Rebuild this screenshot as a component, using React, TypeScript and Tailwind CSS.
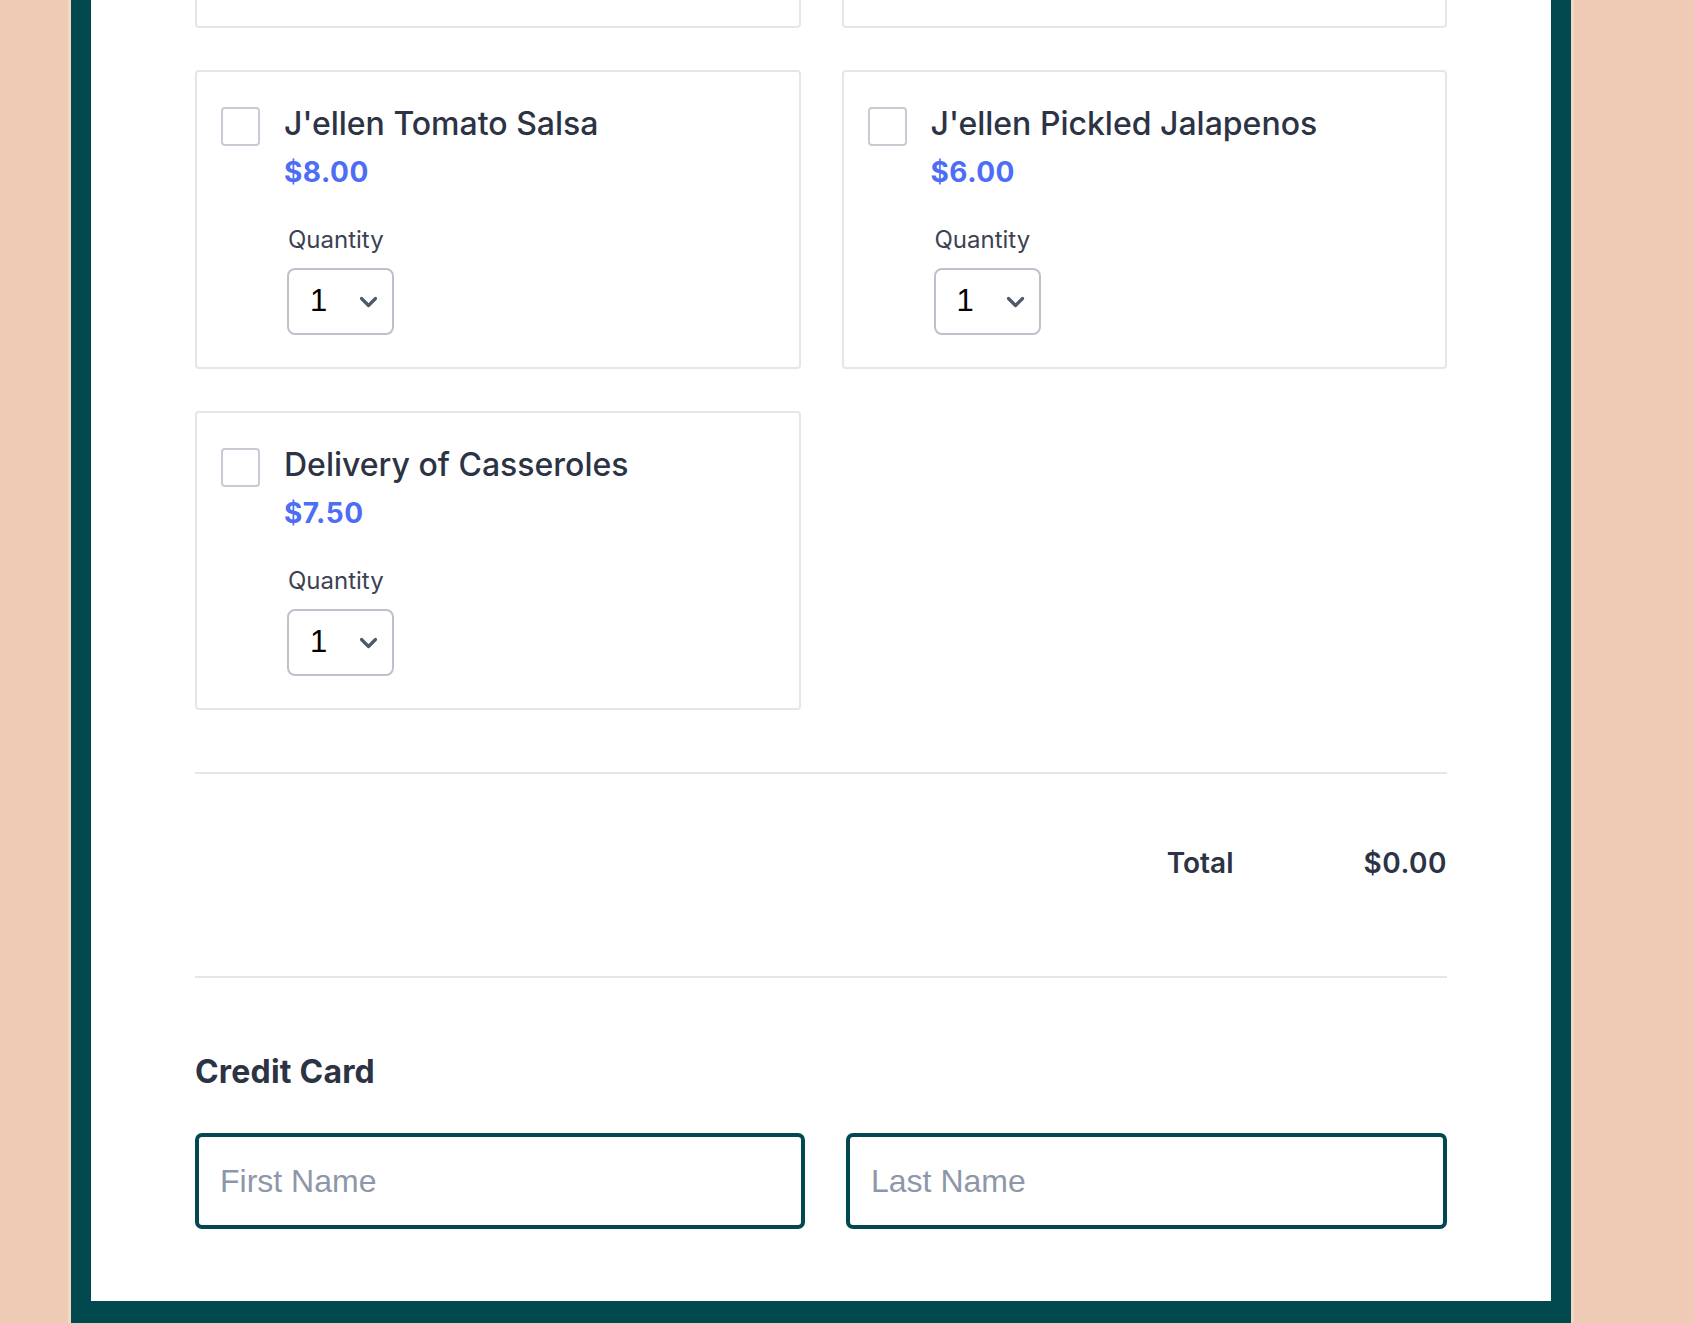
import { useState } from 'react'

type Product = {
  name: string
  price: string
}

const products: Product[] = [
  { name: "J'ellen Tomato Salsa", price: '$8.00' },
  { name: "J'ellen Pickled Jalapenos", price: '$6.00' },
  { name: 'Delivery of Casseroles', price: '$7.50' },
]

function Chevron() {
  return (
    <svg
      aria-hidden
      viewBox="0 0 19 12"
      className="pointer-events-none absolute right-[16px] top-1/2 h-[12px] w-[19px] -translate-y-1/2"
    >
      <path d="M2.5 2.5 L9.5 9.5 L16.5 2.5" fill="none" stroke="#4f596c" strokeWidth="3.2" strokeLinecap="round" strokeLinejoin="round" />
    </svg>
  )
}

function ProductCard({ product }: { product: Product }) {
  const [checked, setChecked] = useState(false)
  const [qty, setQty] = useState('1')

  return (
    <div className="h-[299px] rounded-[4px] border-2 border-[#e3e6eb] bg-white pl-[24px] pr-[24px] pt-[33px]">
      <div className="flex items-start gap-[24px]">
        <input
          type="checkbox"
          checked={checked}
          onChange={(e) => setChecked(e.target.checked)}
          className="mt-[2px] h-[39px] w-[39px] shrink-0 appearance-none rounded-[4px] border-2 border-[#c6cbd4] bg-white checked:bg-[#4e6df5]"
        />
        <div className="flex flex-col">
          <div className="text-[32px] font-medium leading-[38px] text-[#2c3345]">{product.name}</div>
          <div className="mt-[13px] text-[28px] font-bold leading-[32px] tracking-[0.5px] text-[#4e6df5]">{product.price}</div>
          <div className="ml-[3px] mt-[38px] flex flex-col">
            <label className="pl-[1px] text-[24px] font-normal leading-[28px] text-[#3c4254]">Quantity</label>
            <div className="relative mt-[14px] w-[107px]">
              <select
                value={qty}
                onChange={(e) => setQty(e.target.value)}
                className="h-[67px] w-[107px] appearance-none rounded-[8px] border-2 border-[#bcc1cc] bg-white pl-[21px] text-[31px] text-black outline-none"
                style={{ fontFamily: '"Liberation Sans", Arial, sans-serif' }}
              >
                {['1', '2', '3', '4', '5'].map((n) => (
                  <option key={n} value={n}>
                    {n}
                  </option>
                ))}
              </select>
              <Chevron />
            </div>
          </div>
        </div>
      </div>
    </div>
  )
}

export default function App() {
  return (
    <div
      className="h-[1324px] overflow-hidden bg-[#efcab5]"
      style={{ fontFamily: 'Inter, "Noto Sans", sans-serif' }}
    >
      <div className="ml-[68px] w-[1506px] border-x-[3px] border-[#f3d6c6]">
        <div className="bg-[#02484f] px-[20px] pb-[22px]">
          <div className="bg-white px-[104px] pb-[72px]">
            {/* product grid, first row scrolled off the top */}
            <div className="grid grid-cols-2 gap-x-[41px] gap-y-[42px]">
              <div className="h-[28px] rounded-b-[4px] border-2 border-t-0 border-[#e3e6eb]" />
              <div className="h-[28px] rounded-b-[4px] border-2 border-t-0 border-[#e3e6eb]" />
              {products.map((p) => (
                <ProductCard key={p.name} product={p} />
              ))}
            </div>

            <div className="mt-[62px] h-[2px] bg-[#e3e6eb]" />

            <div className="flex justify-end pb-[96px] pt-[72px] text-[28px] font-semibold leading-[34px] text-[#2c3345]">
              <span>Total</span>
              <span className="ml-[130px] tracking-[0.5px]">$0.00</span>
            </div>

            <div className="h-[2px] bg-[#e3e6eb]" />

            <h2 className="mt-[75px] text-[32px] font-bold leading-[38px] tracking-[0.2px] text-[#2c3345]">Credit Card</h2>

            <div className="mt-[42px] grid grid-cols-[610px_1fr] gap-x-[41px]">
              <input
                placeholder="First Name"
                className="h-[96px] w-full rounded-[7px] border-4 border-[#02484f] bg-white px-[21px] text-[32px] text-[#2c3345] outline-none placeholder:text-[#8e97aa]"
                style={{ fontFamily: '"Liberation Sans", Arial, sans-serif' }}
              />
              <input
                placeholder="Last Name"
                className="h-[96px] w-full rounded-[7px] border-4 border-[#02484f] bg-white px-[21px] text-[32px] text-[#2c3345] outline-none placeholder:text-[#8e97aa]"
                style={{ fontFamily: '"Liberation Sans", Arial, sans-serif' }}
              />
            </div>
          </div>
        </div>
      </div>
    </div>
  )
}
